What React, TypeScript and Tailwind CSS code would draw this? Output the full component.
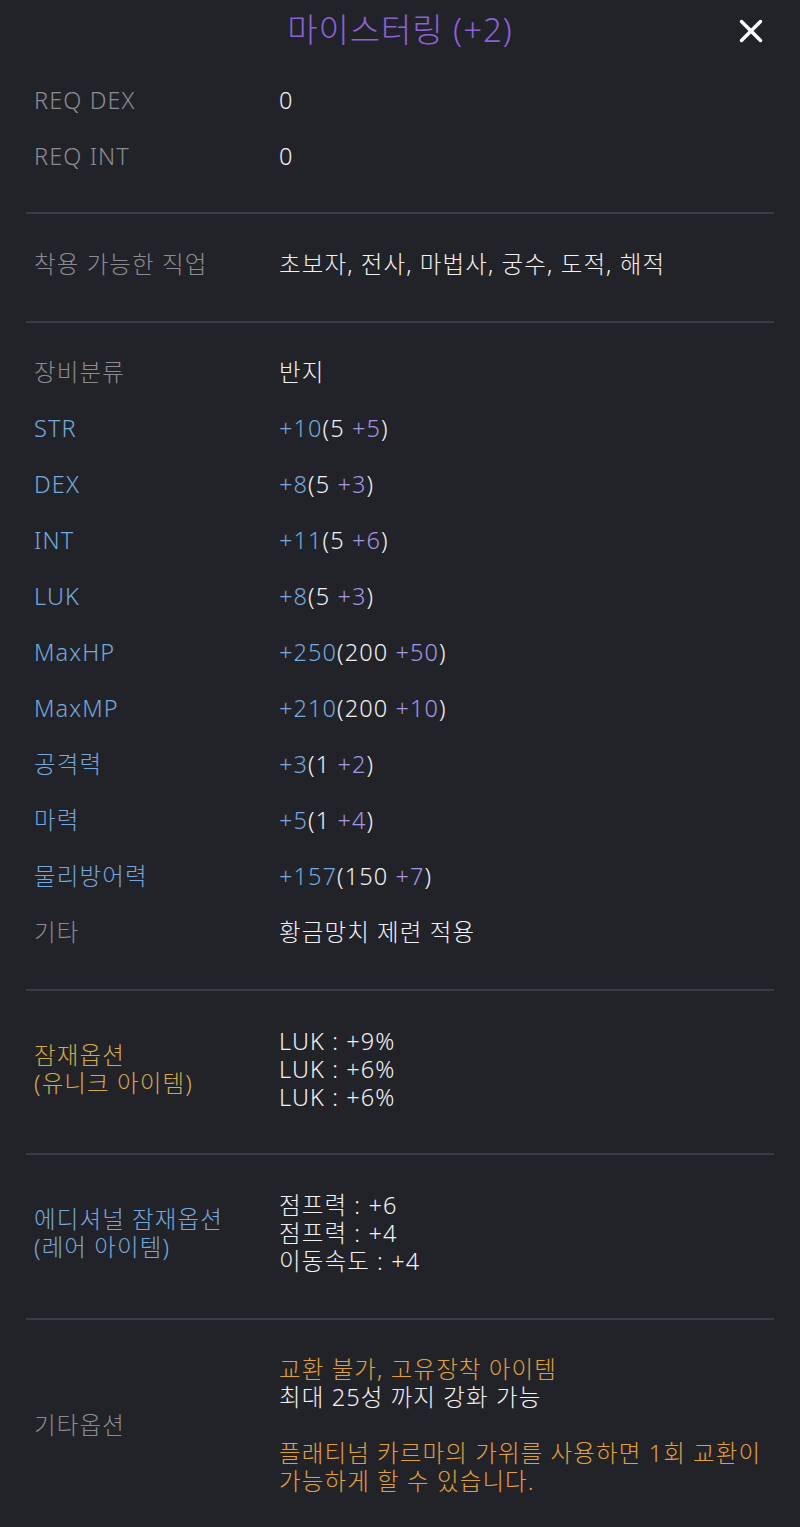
import { X } from 'lucide-react';

const FONT = "font-['Noto_Sans','Noto_Sans_CJK_KR',sans-serif]";

type Stat = { label: string; total: string; base: string; bonus: string };

const stats: Stat[] = [
  { label: 'STR', total: '+10', base: '5', bonus: '+5' },
  { label: 'DEX', total: '+8', base: '5', bonus: '+3' },
  { label: 'INT', total: '+11', base: '5', bonus: '+6' },
  { label: 'LUK', total: '+8', base: '5', bonus: '+3' },
  { label: 'MaxHP', total: '+250', base: '200', bonus: '+50' },
  { label: 'MaxMP', total: '+210', base: '200', bonus: '+10' },
  { label: '공격력', total: '+3', base: '1', bonus: '+2' },
  { label: '마력', total: '+5', base: '1', bonus: '+4' },
  { label: '물리방어력', total: '+157', base: '150', bonus: '+7' },
];

function Divider() {
  return <div className="h-[2px] bg-[#3b3c43]" />;
}

function Row({ label, labelClass = 'text-[#8b8c93]', children }: { label: string; labelClass?: string; children: React.ReactNode }) {
  return (
    <div className="flex h-[56px] items-center">
      <div className={`w-[245px] shrink-0 ${labelClass}`}>{label}</div>
      <div className="text-[#f2f2f4]">{children}</div>
    </div>
  );
}

export default function App() {
  return (
    <div className={`${FONT} min-h-[1527px] w-full bg-[#222328] px-[26px] text-[23.5px] font-light leading-[28px] tracking-[1.1px]`}>
      {/* header */}
      <div className="relative flex h-[60px] items-center justify-center">
        <div className="text-[33px] tracking-[0.9px] text-[#8f60d8]">마이스터링 (+2)</div>
        <button className="absolute right-[4px] top-[12px] text-white">
          <X size={38} strokeWidth={2.2} />
        </button>
      </div>

      {/* required stats */}
      <div className="px-[8px] pt-[12px] pb-[28px]">
        <Row label="REQ DEX">0</Row>
        <Row label="REQ INT">0</Row>
      </div>
      <Divider />

      <div className="px-[8px] pt-[22px] pb-[29px]">
        <Row label="착용 가능한 직업">초보자, 전사, 마법사, 궁수, 도적, 해적</Row>
      </div>
      <Divider />

      <div className="px-[8px] pt-[21px] pb-[29px]">
        <Row label="장비분류">반지</Row>
        {stats.map((s) => (
          <Row key={s.label} label={s.label} labelClass="text-[#74a9df]">
            <span className="text-[#74a9df]">{s.total}</span>
            <span>({s.base} </span>
            <span className="text-[#a597e6]">{s.bonus}</span>
            <span>)</span>
          </Row>
        ))}
        <Row label="기타">황금망치 제련 적용</Row>
      </div>
      <Divider />

      {/* potential */}
      <div className="flex items-center px-[8px] pt-[36px] pb-[42px]">
        <div className="w-[245px] shrink-0 text-[#d4aa48]">
          잠재옵션
          <br />
          (유니크 아이템)
        </div>
        <div className="text-[#f2f2f4]">
          <div>LUK : +9%</div>
          <div>LUK : +6%</div>
          <div>LUK : +6%</div>
        </div>
      </div>
      <Divider />

      <div className="flex items-center px-[8px] pt-[36px] pb-[43px]">
        <div className="w-[245px] shrink-0 text-[#74a9df]">
          에디셔널 잠재옵션
          <br />
          (레어 아이템)
        </div>
        <div className="text-[#f2f2f4]">
          <div>점프력 : +6</div>
          <div>점프력 : +4</div>
          <div>이동속도 : +4</div>
        </div>
      </div>
      <Divider />

      {/* misc */}
      <div className="flex items-center px-[8px] pt-[35px] pb-[32px]">
        <div className="w-[245px] shrink-0 text-[#8b8c93]">기타옵션</div>
        <div className="text-[#f2f2f4]">
          <div className="text-[#e2a03d]">교환 불가, 고유장착 아이템</div>
          <div>최대 25성 까지 강화 가능</div>
          <div className="h-[28px]" />
          <div className="text-[#e2a03d]">
            플래티넘 카르마의 가위를 사용하면 1회 교환이
            <br />
            가능하게 할 수 있습니다.
          </div>
        </div>
      </div>
    </div>
  );
}
